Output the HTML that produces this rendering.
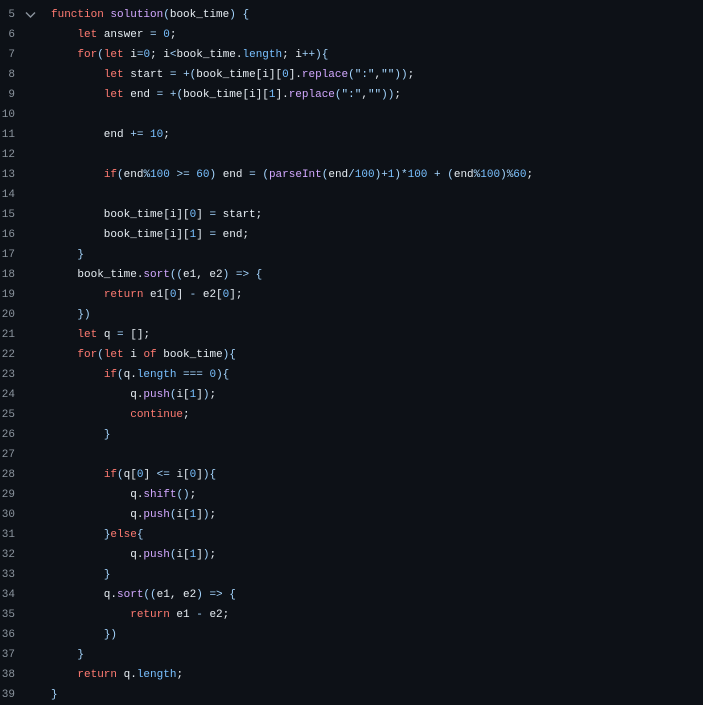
<!DOCTYPE html><html><head><style>
body{margin:0;background:#0d1117;width:703px;height:705px;overflow:hidden;font-family:"Liberation Mono",monospace;font-size:11px;color:#e6edf3}
.l{position:absolute;left:0;height:20px;line-height:20px;white-space:pre}
.n{position:absolute;left:0;width:15px;text-align:right;color:#8b949e}
.c{position:absolute;left:51px}
.k{color:#ff7b72}.f{color:#d2a8ff}.v{color:#79c0ff}.s{color:#a5d6ff}.p{color:#a5d6ff}
</style></head><body>
<div id="w"></div>
<script>
const I="    ";
const L=[
[5,'<span class="k">function</span> <span class="f">solution</span><span class="p">(</span>book_time<span class="p">)</span> <span class="p">{</span>'],
[6,I+'<span class="k">let</span> answer <span class="p">=</span> <span class="v">0</span>;'],
[7,I+'<span class="k">for</span><span class="p">(</span><span class="k">let</span> i<span class="p">=</span><span class="v">0</span>; i<span class="p">&lt;</span>book_time.<span class="v">length</span>; i<span class="p">++</span><span class="p">){</span>'],
[8,I+I+'<span class="k">let</span> start <span class="p">=</span> <span class="p">+(</span>book_time[i][<span class="v">0</span>].<span class="f">replace</span><span class="p">(</span><span class="s">":"</span>,<span class="s">""</span><span class="p">))</span>;'],
[9,I+I+'<span class="k">let</span> end <span class="p">=</span> <span class="p">+(</span>book_time[i][<span class="v">1</span>].<span class="f">replace</span><span class="p">(</span><span class="s">":"</span>,<span class="s">""</span><span class="p">))</span>;'],
[10,''],
[11,I+I+'end <span class="p">+=</span> <span class="v">10</span>;'],
[12,''],
[13,I+I+'<span class="k">if</span><span class="p">(</span>end<span class="p">%</span><span class="v">100</span> <span class="p">&gt;=</span> <span class="v">60</span><span class="p">)</span> end <span class="p">=</span> <span class="p">(</span><span class="f">parseInt</span><span class="p">(</span>end<span class="p">/</span><span class="v">100</span><span class="p">)+</span><span class="v">1</span><span class="p">)*</span><span class="v">100</span> <span class="p">+</span> <span class="p">(</span>end<span class="p">%</span><span class="v">100</span><span class="p">)%</span><span class="v">60</span>;'],
[14,''],
[15,I+I+'book_time[i][<span class="v">0</span>] <span class="p">=</span> start;'],
[16,I+I+'book_time[i][<span class="v">1</span>] <span class="p">=</span> end;'],
[17,I+'<span class="p">}</span>'],
[18,I+'book_time.<span class="f">sort</span><span class="p">((</span>e1, e2<span class="p">)</span> <span class="p">=&gt;</span> <span class="p">{</span>'],
[19,I+I+'<span class="k">return</span> e1[<span class="v">0</span>] <span class="p">-</span> e2[<span class="v">0</span>];'],
[20,I+'<span class="p">})</span>'],
[21,I+'<span class="k">let</span> q <span class="p">=</span> [];'],
[22,I+'<span class="k">for</span><span class="p">(</span><span class="k">let</span> i <span class="k">of</span> book_time<span class="p">){</span>'],
[23,I+I+'<span class="k">if</span><span class="p">(</span>q.<span class="v">length</span> <span class="p">===</span> <span class="v">0</span><span class="p">){</span>'],
[24,I+I+I+'q.<span class="f">push</span><span class="p">(</span>i[<span class="v">1</span>]<span class="p">)</span>;'],
[25,I+I+I+'<span class="k">continue</span>;'],
[26,I+I+'<span class="p">}</span>'],
[27,''],
[28,I+I+'<span class="k">if</span><span class="p">(</span>q[<span class="v">0</span>] <span class="p">&lt;=</span> i[<span class="v">0</span>]<span class="p">){</span>'],
[29,I+I+I+'q.<span class="f">shift</span><span class="p">()</span>;'],
[30,I+I+I+'q.<span class="f">push</span><span class="p">(</span>i[<span class="v">1</span>]<span class="p">)</span>;'],
[31,I+I+'<span class="p">}</span><span class="k">else</span><span class="p">{</span>'],
[32,I+I+I+'q.<span class="f">push</span><span class="p">(</span>i[<span class="v">1</span>]<span class="p">)</span>;'],
[33,I+I+'<span class="p">}</span>'],
[34,I+I+'q.<span class="f">sort</span><span class="p">((</span>e1, e2<span class="p">)</span> <span class="p">=&gt;</span> <span class="p">{</span>'],
[35,I+I+I+'<span class="k">return</span> e1 <span class="p">-</span> e2;'],
[36,I+I+'<span class="p">})</span>'],
[37,I+'<span class="p">}</span>'],
[38,I+'<span class="k">return</span> q.<span class="v">length</span>;'],
[39,'<span class="p">}</span>']];
let h='';
L.forEach((r,i)=>{h+=`<div class="l" style="top:${5+i*20}px;width:703px"><span class="n">${r[0]}</span><span class="c">${r[1]}</span></div>`});
h+='<svg style="position:absolute;left:25px;top:11px" width="11" height="8"><path d="M1 1.5L5.5 6L10 1.5" stroke="#8b949e" stroke-width="1.4" fill="none"/></svg>';
document.getElementById('w').innerHTML=h;
</script>
</body></html>
